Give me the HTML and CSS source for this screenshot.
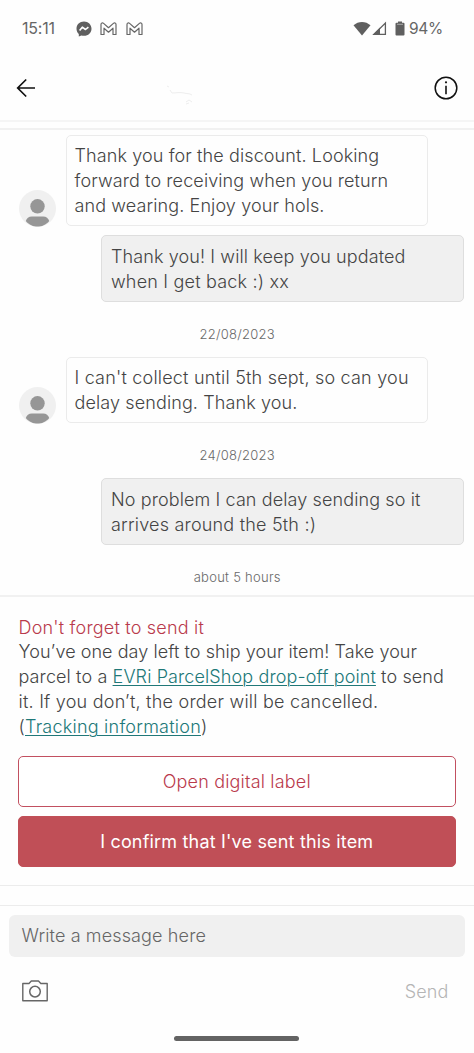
FILE: index.html
```html
<!DOCTYPE html>
<html lang="en">
<head>
<meta charset="utf-8">
<meta name="viewport" content="width=device-width, initial-scale=1">
<title>Conversation</title>
<link rel="stylesheet" href="styles.css">
</head>
<body>
<div class="screen">
  <div class="status">
    <span class="clock">15:11</span>
    <svg class="messenger" width="16" height="16" viewBox="0 0 16 16"><path d="M8 .5C3.700.5.500 3.600.500 7.700c0 2.200.9 4 2.300 5.300v2.500l2.600-1.100c.8.200 1.700.4 2.600.4 4.300 0 7.500-3.100 7.500-7.100S12.300.5 8 .5Z" fill="#5f5f5f"/><path d="m3.600 9.500 2.700-3.300 3.200 2.300 2.900-2.400" fill="none" stroke="#fff" stroke-width="1.600" stroke-linejoin="round"/></svg>
    <svg class="mail" width="17" height="14" viewBox="0 0 17 14"><path d="M1 12.500V2.500C1 .9 2.500.5 3.600 1.400L8.500 5.700l4.900-4.300c1.100-.9 2.600-.5 2.600 1.100v10h-3V6.200l-4.500 4-4.500-4v6.300Z" fill="none" stroke="#666" stroke-width="1.200" stroke-linejoin="round"/></svg>
    <svg class="mail" width="17" height="14" viewBox="0 0 17 14"><path d="M1 12.500V2.500C1 .9 2.500.5 3.600 1.400L8.500 5.700l4.900-4.300c1.100-.9 2.600-.5 2.600 1.100v10h-3V6.200l-4.500 4-4.500-4v6.300Z" fill="none" stroke="#666" stroke-width="1.200" stroke-linejoin="round"/></svg>
    <svg class="wifi" width="18" height="15" viewBox="0 0 18 15"><path d="M.5 4.300C5.300-.2 12.700-.2 17.500 4.300L9 14.500Z" fill="#5f5f5f"/></svg>
    <svg class="signal" width="15" height="15" viewBox="0 0 15 15"><path d="M13.400 2v11.400H2Z" fill="none" stroke="#5f5f5f" stroke-width="1.300"/><path d="M.5 14 8 6.500V14Z" fill="#5f5f5f"/></svg>
    <svg class="battery" width="10" height="15" viewBox="0 0 10 15"><path d="M3 .5h4v1.300h1.500q1 0 1 1V13.500q0 1-1 1h-7q-1 0-1-1V2.800q0-1 1-1H3Z" fill="#5f5f5f"/><path d="M2 3.300h6" stroke="#aaa"/></svg>
    <span class="percent">94%</span>
  </div>
  <header class="bar">
    <svg width="20" height="20" viewBox="0 0 20 20"><path d="M10.200 1.500 1.700 10l8.500 8.500M1.700 10H19" fill="none" stroke="#111" stroke-width="1.700"/></svg>
    <svg class="scribble" width="30" height="22" viewBox="0 0 30 22"><path d="m1 1 2 1M4 5l2 3c4 0 8-1 12 0 3 1 5 0 8 2M20 17l3-2 3 2M20 19l3-1" fill="none" stroke="#eee"/></svg>
    <svg class="info" width="24" height="24" viewBox="0 0 24 24"><circle cx="12" cy="12" r="10.800" fill="none" stroke="#111" stroke-width="1.500"/><path d="M12 9.800v8.500" stroke="#111" stroke-width="1.600"/><circle cx="12" cy="6.300" r="1.100" fill="#111"/></svg>
  </header>
  <main class="thread">
    <div class="row">
      <svg class="avatar" width="37" height="37" viewBox="0 0 37 37"><circle cx="18.500" cy="18.500" r="18.500" fill="#f0f0f0"/><circle cx="18.500" cy="16.300" r="7.200" fill="#969696"/><path d="M6.800 31c.7-2.900 3-4.600 6-4.600h11.400c3 0 5.300 1.700 6 4.600C27 35 22.500 36.600 18.500 36.600S10 35 6.800 31Z" fill="#969696"/></svg>
      <p class="bubble">Thank you for the discount. Looking<br>forward to receiving when you return<br>and wearing. Enjoy your hols.</p>
    </div>
    <div class="row mine first"><p class="bubble">Thank you! I will keep you updated<br><span class="wide">when I get back :) xx</span></p></div>
    <time class="date">22/08/2023</time>
    <div class="row">
      <svg class="avatar" width="37" height="37" viewBox="0 0 37 37"><circle cx="18.500" cy="18.500" r="18.500" fill="#f0f0f0"/><circle cx="18.500" cy="16.300" r="7.200" fill="#969696"/><path d="M6.800 31c.7-2.900 3-4.600 6-4.600h11.400c3 0 5.300 1.700 6 4.600C27 35 22.500 36.600 18.500 36.600S10 35 6.800 31Z" fill="#969696"/></svg>
      <p class="bubble"><span class="wide">I can't collect until 5th sept, so can you</span><br>delay sending. Thank you.</p>
    </div>
    <time class="date">24/08/2023</time>
    <div class="row mine"><p class="bubble">No problem I can delay sending so it<br><span class="wide">arrives around the 5th :)</span></p></div>
    <time class="date">about 5 hours</time>
  </main>
  <section class="notice">
    <h2 class="title">Don't forget to send it</h2>
    <p class="copy"><span class="tight">You’ve one day left to ship your item! Take your</span><br>parcel to a <a class="link">EVRi ParcelShop drop-off point</a> to send<br><span class="wider">it. If you don’t, the order will be cancelled.</span><br><span class="wider">(<a class="link">Tracking information</a>)</span></p>
    <button class="btn outline">Open digital label</button>
    <button class="btn solid">I confirm that I've sent this item</button>
  </section>
  <footer class="composer">
    <div class="input">Write a message here</div>
    <div class="tools">
      <svg width="26" height="22" viewBox="0 0 26 22"><path d="M.8 3.500H7L9.300 1h7.200l2.300 2.500h6.400v17.200H.8Z" fill="none" stroke="#666" stroke-width="1.400" stroke-linejoin="round"/><circle cx="13" cy="11.600" r="5.300" fill="none" stroke="#666" stroke-width="1.500"/></svg>
      <span class="send">Send</span>
    </div>
    <div class="home"></div>
  </footer>
</div>
</body>
</html>
```
FILE: styles.css
```css
* { box-sizing: border-box; }
body { margin: 0; background: #fefefe; color: #444; font-family: Inter, "Liberation Sans", sans-serif; font-weight: 340; font-size: 18px; line-height: 25px; letter-spacing: .11px; }
p, h2 { margin: 0; }
svg { display: block; flex: none; }
.wide { letter-spacing: .2px; }
.wider { letter-spacing: .23px; }
.tight { letter-spacing: .05px; }
.screen { width: 474px; height: 1053px; display: flex; flex-direction: column; overflow: hidden; }
.status { height: 56px; display: flex; align-items: center; padding: 1px 32px 0 22px; font-size: 16px; font-weight: 400; color: #666; letter-spacing: 0; }
.clock { width: 53.5px; letter-spacing: -.2px; }
.percent { width: 33px; font-size: 15.5px; letter-spacing: -.3px; }
.mail { margin-left: 8.5px; }
.wifi { margin-left: auto; }
.signal { margin-left: 1px; }
.battery { margin: 0 4px 0 8px; }
.bar { height: 66px; display: flex; align-items: center; padding: 0 16px; border-bottom: 2px solid #f5f5f5; }
.scribble { margin: 15px 0 0 130px; }
.info { margin-left: auto; }
.thread { height: 467px; margin-top: 6px; border-top: 2px solid #f1f1f1; padding: 5px 10px 0 18.5px; display: flex; flex-direction: column; }
.row { display: flex; align-items: flex-end; gap: 10px; }
.avatar { margin-bottom: -1px; }
.bubble { width: 362px; height: 66px; padding: 7px 8px; border: 1px solid #ebebeb; border-radius: 5px; white-space: nowrap; }
.row:first-child .bubble { height: 91px; }
.mine { justify-content: flex-end; }
.first { margin-top: 9px; }
.mine .bubble { width: 363px; height: 67px; background: #f0f0f0; border: 1.5px solid #dedede; padding: 8px 9px; }
.date { height: 55px; padding-top: 10px; line-height: 45px; font-size: 13px; text-align: center; color: #686868; margin-right: 8px; letter-spacing: .27px; }
.notice { height: 291px; border-top: 2px solid #f1f1f1; border-bottom: 1px solid #ececec; padding: 20px 18px 0 18.5px; }
.title { font-size: 18px; font-weight: 340; line-height: 22px; color: #b93a4c; letter-spacing: .2px; }
.copy { white-space: nowrap; }
.link { color: #207878; text-decoration: underline; text-underline-offset: 2px; text-decoration-thickness: 1px; }
.btn { display: block; width: 437.5px; height: 51px; border-radius: 5px; font: inherit; text-align: center; padding: 0 0 1px; margin-left: -.5px; }
.outline { margin-top: 17px; background: #fff; border: 1px solid #c25060; color: #b93a4c; letter-spacing: .18px; }
.solid { margin-top: 9px; background: #c04f57; border: 1px solid #c04f57; color: #fff; font-weight: 370; letter-spacing: .18px; }
.composer { margin-top: 19px; border-top: 1px solid #ececec; padding: 9px 9px 0; }
.input { height: 42px; background: #f0f0f0; border-radius: 6px; padding: 8px 12.5px; color: #666; letter-spacing: .13px; }
.tools { height: 68px; display: flex; justify-content: space-between; align-items: center; padding: 0 16.5px 0 13px; }
.send { color: #b5b5b5; }
.home { width: 125px; height: 5px; border-radius: 3px; background: #636363; margin: 11px 0 0 165px; }
```
